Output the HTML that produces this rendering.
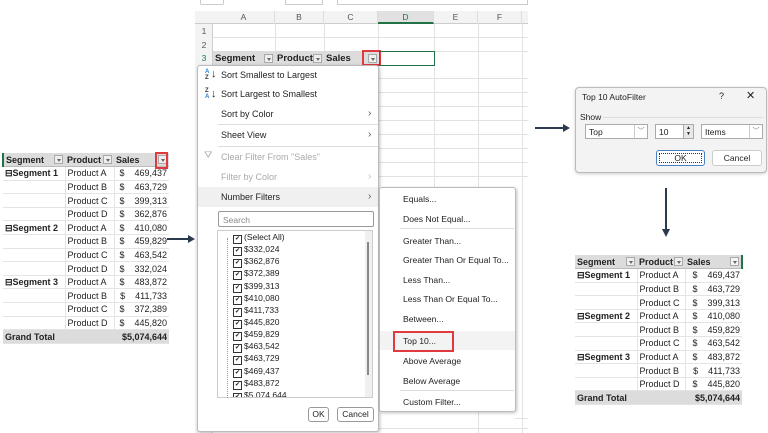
<!DOCTYPE html>
<html><head><meta charset="utf-8"><style>
*{margin:0;padding:0;box-sizing:border-box}
body{width:768px;height:433px;overflow:hidden;background:#fff;font-family:"Liberation Sans",Arial,sans-serif;font-size:9px;color:#222;position:relative}
.a{position:absolute}
.pv{position:absolute;border-collapse:collapse;font-size:9px;table-layout:fixed}
.pv td{height:13.6px;padding:0 2px;border-bottom:1px solid #e4e4e4;white-space:nowrap;line-height:12px;overflow:hidden}
.pv tr.h td{background:#dcdcdc;font-weight:bold;border-bottom:1px solid #bbb}
.pv tr.g td{background:#dcdcdc;font-weight:bold;border-top:1px solid #999}
.pv td.s{font-weight:bold}
.pv td.n{text-align:right}
.pv td.c2{border-left:1px solid #e4e4e4}
.hc{display:flex;justify-content:space-between;align-items:center}
.dd{display:inline-block;width:9px;height:9px;border:1px solid #aaa;background:#eee;position:relative;flex:none}
.dd:after{content:"";position:absolute;left:2px;top:3px;border:2px solid transparent;border-top:3px solid #666}
.mi{position:absolute;left:221px;font-size:9px;color:#222}
.sm{position:absolute;left:403px;font-size:8.6px;color:#222}
.sep{position:absolute;height:1px;background:#ddd}
.cb{position:absolute;left:233px;font-size:8.5px;line-height:11px;white-space:nowrap}
.cb:before{content:"✔";display:inline-block;width:7px;height:7px;border:1px solid #333;font-size:6px;line-height:6px;text-align:center;margin-right:2px;vertical-align:0}
.btn{position:absolute;border:1px solid #999;border-radius:3px;background:#fff;font-size:8.5px;text-align:center}
.col{position:absolute;top:11px;height:13px;font-size:8.5px;color:#555;text-align:center;line-height:13px;border-right:1px solid #ddd}
.hl{position:absolute;height:1px;background:#e2e2e2}
.vl{position:absolute;width:1px;background:#e2e2e2}
</style></head><body>

<div class="a" style="left:200px;top:0;width:24px;height:5px;border:1px solid #ccc;border-top:none;border-radius:0 0 2px 2px"></div>
<div class="a" style="left:285px;top:0;width:38px;height:5px;border:1px solid #ccc;border-top:none"></div>
<div class="a" style="left:337px;top:0;width:191px;height:5px;border:1px solid #ccc;border-top:none"></div>
<div class="a" style="left:195px;top:11px;width:333px;height:13px;background:#f3f3f3;border-bottom:1px solid #ccc"></div>
<div class="col" style="left:213px;width:62px">A</div>
<div class="col" style="left:275px;width:49px">B</div>
<div class="col" style="left:324px;width:54px">C</div>
<div class="col" style="left:378px;width:56px;background:#e1e1e1;color:#217346;border-bottom:2px solid #217346">D</div>
<div class="col" style="left:434px;width:44px">E</div>
<div class="col" style="left:478px;width:44px">F</div>
<div class="a" style="left:195px;top:24px;width:18px;height:409px;background:#f3f3f3;border-right:1px solid #ccc"></div>
<div class="a" style="left:195px;top:26px;width:18px;font-size:8.5px;color:#555;text-align:center">1</div>
<div class="a" style="left:195px;top:40px;width:18px;font-size:8.5px;color:#555;text-align:center">2</div>
<div class="a" style="left:195px;top:53px;width:18px;font-size:8.5px;color:#217346;text-align:center">3</div>
<div class="hl" style="left:213px;top:37px;width:315px"></div>
<div class="hl" style="left:213px;top:51px;width:315px"></div>
<div class="hl" style="left:378px;top:78px;width:150px"></div>
<div class="hl" style="left:378px;top:92px;width:150px"></div>
<div class="hl" style="left:378px;top:106px;width:150px"></div>
<div class="hl" style="left:378px;top:120px;width:150px"></div>
<div class="hl" style="left:378px;top:134px;width:150px"></div>
<div class="hl" style="left:378px;top:148px;width:150px"></div>
<div class="hl" style="left:378px;top:162px;width:150px"></div>
<div class="hl" style="left:378px;top:176px;width:150px"></div>
<div class="hl" style="left:515px;top:418px;width:13px"></div>
<div class="hl" style="left:378px;top:428px;width:150px"></div>
<div class="vl" style="left:275px;top:24px;height:27px"></div>
<div class="vl" style="left:324px;top:24px;height:27px"></div>
<div class="vl" style="left:378px;top:24px;height:41px"></div>
<div class="vl" style="left:434px;top:24px;height:163px"></div>
<div class="vl" style="left:478px;top:24px;height:163px"></div>
<div class="vl" style="left:522px;top:24px;height:409px"></div>
<div class="vl" style="left:478px;top:412px;height:21px"></div>
<div class="a" style="left:213px;top:51px;width:165px;height:14px;background:#dcdcdc"></div>
<div class="a" style="left:215px;top:53px;font-size:9.5px;font-weight:bold">Segment</div>
<div class="a" style="left:264px;top:54px"><span class="dd"></span></div>
<div class="a" style="left:277px;top:53px;font-size:9.5px;font-weight:bold">Product</div>
<div class="a" style="left:313px;top:54px"><span class="dd"></span></div>
<div class="a" style="left:326px;top:53px;font-size:9.5px;font-weight:bold">Sales</div>
<div class="a" style="left:368px;top:54px"><span class="dd"></span></div>
<div class="a" style="left:362px;top:50px;width:19px;height:16px;border:2px solid #e0393e"></div>
<div class="a" style="left:379px;top:51px;width:56px;height:15px;border:1.5px solid #217346"></div>

<!-- dropdown menu -->
<div class="a" style="left:197px;top:65px;width:182px;height:367px;background:#fff;border:1px solid #bbb;border-radius:3px;box-shadow:1px 1px 3px rgba(0,0,0,.25)"></div>
<div class="a" style="left:205px;top:69px;font-size:6px;line-height:6px;color:#2a7fd4;font-weight:bold">A<br><span style="color:#333">Z</span></div>
<div class="a" style="left:211px;top:68px;font-size:11px">↓</div>
<div class="mi" style="top:70px">Sort Smallest to Largest</div>
<div class="a" style="left:205px;top:88px;font-size:6px;line-height:6px;color:#333;font-weight:bold">Z<br><span style="color:#2a7fd4">A</span></div>
<div class="a" style="left:211px;top:88px;font-size:11px">↓</div>
<div class="mi" style="top:89px">Sort Largest to Smallest</div>
<div class="mi" style="top:109px">Sort by Color</div><div class="a" style="left:368px;top:108px;font-size:10px;color:#555">›</div>
<div class="sep" style="left:218px;top:124px;width:160px"></div>
<div class="mi" style="top:130px">Sheet View</div><div class="a" style="left:368px;top:129px;font-size:10px;color:#555">›</div>
<div class="sep" style="left:218px;top:146px;width:160px"></div>
<div class="a" style="left:204px;top:150px;font-size:10px;color:#aaa">⛛</div>
<div class="mi" style="top:152px;color:#aaa">Clear Filter From "Sales"</div>
<div class="mi" style="top:172px;color:#aaa">Filter by Color</div><div class="a" style="left:368px;top:171px;font-size:10px;color:#bbb">›</div>
<div class="a" style="left:198px;top:187px;width:180px;height:20px;background:#f0f0f0"></div>
<div class="mi" style="top:192px">Number Filters</div><div class="a" style="left:368px;top:191px;font-size:10px;color:#555">›</div>
<div class="a" style="left:218px;top:211px;width:156px;height:16px;border:1px solid #999;border-radius:2px;font-size:8.5px;color:#888;padding:3px 4px">Search</div>
<div class="a" style="left:217px;top:230px;width:156px;height:168px;border:1px solid #ccc;background:#fff;overflow:hidden"></div>
<div class="a" style="left:365px;top:231px;width:7px;height:166px;background:#f0f0f0"></div>
<div class="a" style="left:367px;top:242px;width:2px;height:133px;background:#888"></div>
<div class="a" style="left:227px;top:238px;width:0;height:160px;border-left:1px dotted #999"></div>
<div class="a" style="left:218px;top:231px;width:146px;height:166px;overflow:hidden">
<div class="cb" style="left:15px;top:1px">(Select All)</div>
<div class="cb" style="left:15px;top:13px">$332,024</div>
<div class="cb" style="left:15px;top:25px">$362,876</div>
<div class="cb" style="left:15px;top:37px">$372,389</div>
<div class="cb" style="left:15px;top:50px">$399,313</div>
<div class="cb" style="left:15px;top:62px">$410,080</div>
<div class="cb" style="left:15px;top:74px">$411,733</div>
<div class="cb" style="left:15px;top:86px">$445,820</div>
<div class="cb" style="left:15px;top:98px">$459,829</div>
<div class="cb" style="left:15px;top:110px">$463,542</div>
<div class="cb" style="left:15px;top:122px">$463,729</div>
<div class="cb" style="left:15px;top:135px">$469,437</div>
<div class="cb" style="left:15px;top:147px">$483,872</div>
<div class="cb" style="left:15px;top:159px">$5,074,644</div>
</div>
<div class="btn" style="left:308px;top:407px;width:21px;height:15px;line-height:13px">OK</div>
<div class="btn" style="left:337px;top:407px;width:37px;height:15px;line-height:13px">Cancel</div>

<!-- submenu -->
<div class="a" style="left:379px;top:187px;width:137px;height:225px;background:#fff;border:1px solid #bbb;border-radius:3px;box-shadow:1px 1px 3px rgba(0,0,0,.25)"></div>
<div class="sm" style="top:194px">Equals...</div>
<div class="sm" style="top:214px">Does Not Equal...</div>
<div class="sep" style="left:400px;top:228px;width:114px"></div>
<div class="sm" style="top:236px">Greater Than...</div>
<div class="sm" style="top:255px">Greater Than Or Equal To...</div>
<div class="sm" style="top:275px">Less Than...</div>
<div class="sm" style="top:294px">Less Than Or Equal To...</div>
<div class="sm" style="top:314px">Between...</div>
<div class="a" style="left:380px;top:331px;width:135px;height:19px;background:#f3f3f3"></div>
<div class="sm" style="top:336px">Top 10...</div>
<div class="a" style="left:393px;top:331px;width:61px;height:21px;border:2px solid #e0393e"></div>
<div class="sm" style="top:356px">Above Average</div>
<div class="sm" style="top:376px">Below Average</div>
<div class="sep" style="left:400px;top:390px;width:114px"></div>
<div class="sm" style="top:397px">Custom Filter...</div>

<!-- left pivot -->
<table class="pv" style="left:2px;top:153px;width:166px">
<colgroup><col style="width:62px"><col style="width:49px"><col style="width:55px"></colgroup>
<tr class="h"><td style="border-left:2px solid #217346"><div class="hc">Segment<span class="dd"></span></div></td><td><div class="hc">Product<span class="dd"></span></div></td><td><div class="hc">Sales<span class="dd"></span></div></td></tr>
<tr><td class="s">⊟Segment 1</td><td class="c2">Product A</td><td class="n c2">$&nbsp;&nbsp;&nbsp;&nbsp;469,437</td></tr>
<tr><td></td><td class="c2">Product B</td><td class="n c2">$&nbsp;&nbsp;&nbsp;&nbsp;463,729</td></tr>
<tr><td></td><td class="c2">Product C</td><td class="n c2">$&nbsp;&nbsp;&nbsp;&nbsp;399,313</td></tr>
<tr><td></td><td class="c2">Product D</td><td class="n c2">$&nbsp;&nbsp;&nbsp;&nbsp;362,876</td></tr>
<tr><td class="s">⊟Segment 2</td><td class="c2">Product A</td><td class="n c2">$&nbsp;&nbsp;&nbsp;&nbsp;410,080</td></tr>
<tr><td></td><td class="c2">Product B</td><td class="n c2">$&nbsp;&nbsp;&nbsp;&nbsp;459,829</td></tr>
<tr><td></td><td class="c2">Product C</td><td class="n c2">$&nbsp;&nbsp;&nbsp;&nbsp;463,542</td></tr>
<tr><td></td><td class="c2">Product D</td><td class="n c2">$&nbsp;&nbsp;&nbsp;&nbsp;332,024</td></tr>
<tr><td class="s">⊟Segment 3</td><td class="c2">Product A</td><td class="n c2">$&nbsp;&nbsp;&nbsp;&nbsp;483,872</td></tr>
<tr><td></td><td class="c2">Product B</td><td class="n c2">$&nbsp;&nbsp;&nbsp;&nbsp;411,733</td></tr>
<tr><td></td><td class="c2">Product C</td><td class="n c2">$&nbsp;&nbsp;&nbsp;&nbsp;372,389</td></tr>
<tr><td></td><td class="c2">Product D</td><td class="n c2">$&nbsp;&nbsp;&nbsp;&nbsp;445,820</td></tr>
<tr class="g"><td>Grand Total</td><td></td><td class="n">$5,074,644</td></tr>
</table>
<div class="a" style="left:155px;top:152px;width:13px;height:17px;border:2px solid #e0393e"></div>

<!-- arrows -->
<div class="a" style="left:167px;top:238px;width:22px;height:2px;background:#2b3a4e"></div>
<div class="a" style="left:188px;top:235px;border:4px solid transparent;border-left:7px solid #2b3a4e"></div>
<div class="a" style="left:535px;top:127px;width:29px;height:2px;background:#2b3a4e"></div>
<div class="a" style="left:563px;top:124px;border:4px solid transparent;border-left:7px solid #2b3a4e"></div>
<div class="a" style="left:665px;top:188px;width:2px;height:42px;background:#2b3a4e"></div>
<div class="a" style="left:662px;top:229px;border:4px solid transparent;border-top:8px solid #2b3a4e"></div>

<!-- dialog -->
<div class="a" style="left:575px;top:87px;width:192px;height:86px;background:#f3f3f3;border:1px solid #bbb;border-radius:4px;box-shadow:0 1px 3px rgba(0,0,0,.2)"></div>
<div class="a" style="left:582px;top:92px;font-size:8.5px">Top 10 AutoFilter</div>
<div class="a" style="left:719px;top:91px;font-size:9px">?</div>
<div class="a" style="left:746px;top:89px;font-size:11px">✕</div>
<div class="a" style="left:580px;top:112px;font-size:8.5px">Show</div>
<div class="a" style="left:603px;top:117px;width:160px;height:1px;background:#ddd"></div>
<div class="a" style="left:585px;top:124px;width:63px;height:15px;background:#fff;border:1px solid #aaa;font-size:8.5px;padding:2px 3px">Top<span style="position:absolute;right:0;top:0;width:13px;height:13px;border-left:1px solid #ccc;font-size:7px;color:#777;text-align:center;line-height:13px">﹀</span></div>
<div class="a" style="left:655px;top:124px;width:39px;height:15px;background:#fff;border:1px solid #aaa;font-size:8.5px;padding:2px 3px">10<span style="position:absolute;right:0;top:0;width:10px;height:13px;background:#e8e8e8;border-left:1px solid #aaa;font-size:5px;text-align:center;line-height:6px">▲<br>▼</span></div>
<div class="a" style="left:701px;top:124px;width:62px;height:15px;background:#fff;border:1px solid #aaa;font-size:8.5px;padding:2px 3px">Items<span style="position:absolute;right:0;top:0;width:13px;height:13px;border-left:1px solid #ccc;font-size:7px;color:#777;text-align:center;line-height:13px">﹀</span></div>
<div class="btn" style="left:656px;top:150px;width:49px;height:16px;line-height:14px;border:1.5px solid #4a7fc1;outline:1px dotted #333;outline-offset:-4px">OK</div>
<div class="btn" style="left:712px;top:150px;width:50px;height:16px;line-height:14px;border-color:#ccc">Cancel</div>

<!-- right pivot -->
<table class="pv" style="left:575px;top:255px;width:167px">
<colgroup><col style="width:62px"><col style="width:48px"><col style="width:57px"></colgroup>
<tr class="h"><td><div class="hc">Segment<span class="dd"></span></div></td><td><div class="hc">Product<span class="dd"></span></div></td><td style="border-right:2px solid #217346"><div class="hc">Sales<span class="dd" style="background:#f4f4f4"></span></div></td></tr>
<tr><td class="s">⊟Segment 1</td><td class="c2">Product A</td><td class="n c2">$&nbsp;&nbsp;&nbsp;&nbsp;469,437</td></tr>
<tr><td></td><td class="c2">Product B</td><td class="n c2">$&nbsp;&nbsp;&nbsp;&nbsp;463,729</td></tr>
<tr><td></td><td class="c2">Product C</td><td class="n c2">$&nbsp;&nbsp;&nbsp;&nbsp;399,313</td></tr>
<tr><td class="s">⊟Segment 2</td><td class="c2">Product A</td><td class="n c2">$&nbsp;&nbsp;&nbsp;&nbsp;410,080</td></tr>
<tr><td></td><td class="c2">Product B</td><td class="n c2">$&nbsp;&nbsp;&nbsp;&nbsp;459,829</td></tr>
<tr><td></td><td class="c2">Product C</td><td class="n c2">$&nbsp;&nbsp;&nbsp;&nbsp;463,542</td></tr>
<tr><td class="s">⊟Segment 3</td><td class="c2">Product A</td><td class="n c2">$&nbsp;&nbsp;&nbsp;&nbsp;483,872</td></tr>
<tr><td></td><td class="c2">Product B</td><td class="n c2">$&nbsp;&nbsp;&nbsp;&nbsp;411,733</td></tr>
<tr><td></td><td class="c2">Product D</td><td class="n c2">$&nbsp;&nbsp;&nbsp;&nbsp;445,820</td></tr>
<tr class="g"><td>Grand Total</td><td></td><td class="n">$5,074,644</td></tr>
</table>

</body></html>
